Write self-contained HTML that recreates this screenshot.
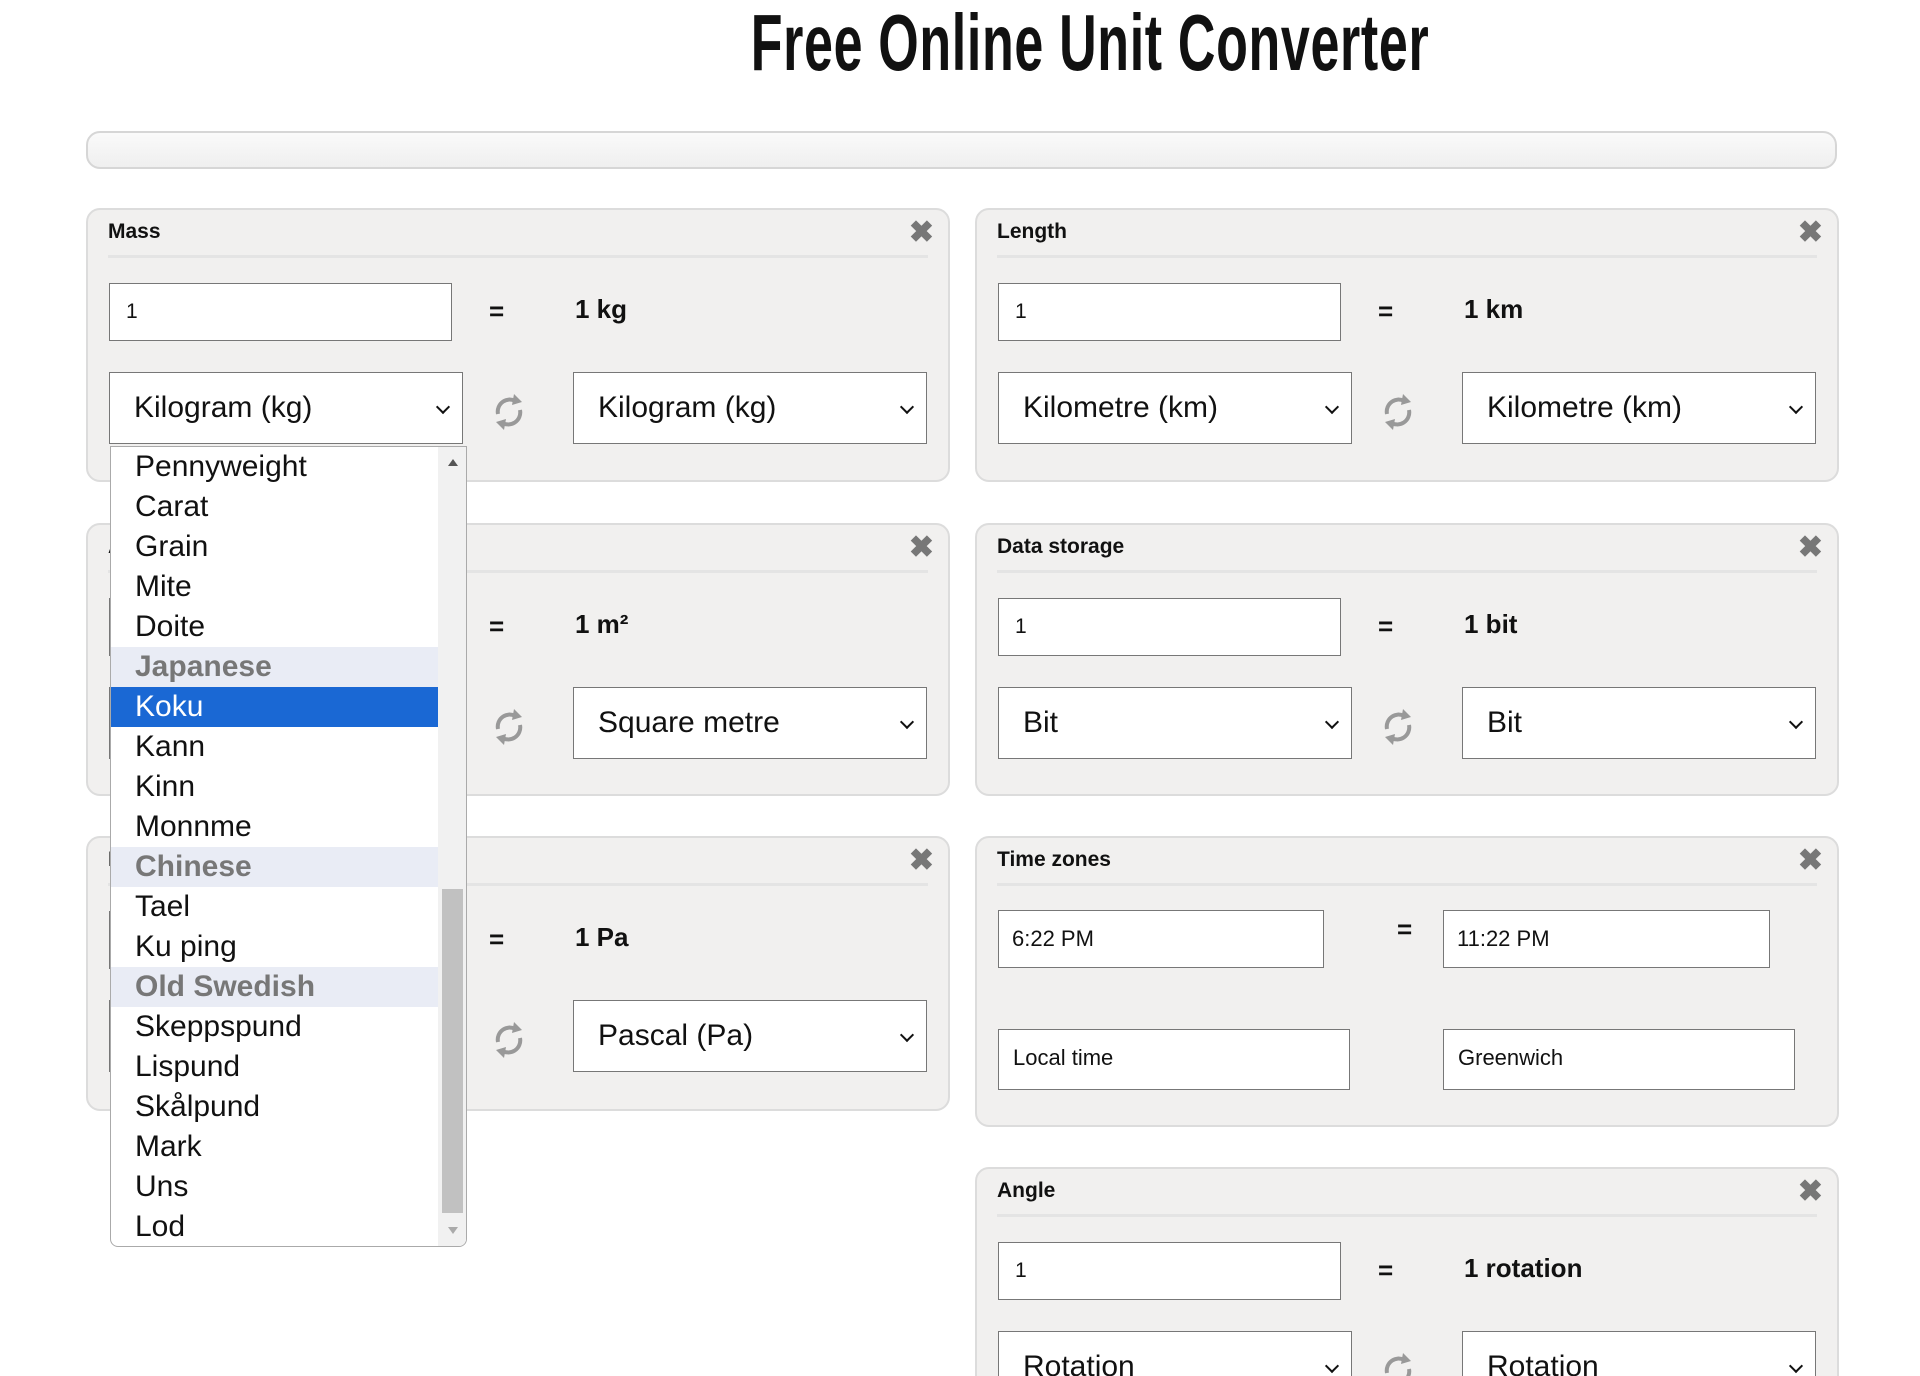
<!DOCTYPE html>
<html><head><meta charset="utf-8"><style>
*{box-sizing:border-box;margin:0;padding:0}
html,body{width:1920px;height:1376px;overflow:hidden}
body{background:#fff;position:relative;font-family:"Liberation Sans",Arial,sans-serif;color:#111}
.title{position:absolute;left:0;width:3354px;top:-3px;text-align:center;font-size:80px;font-weight:bold;font-family:"Liberation Sans Narrow","Liberation Sans",sans-serif;transform:scaleX(.65);transform-origin:0 0;letter-spacing:1px;white-space:nowrap}
.bar{position:absolute;left:86px;top:131px;width:1751px;height:38px;border:2px solid #d6d6d6;border-radius:14px;background:linear-gradient(#fafafa,#efefef)}
.panel{position:absolute;width:864px;border:2px solid #dcdcdc;border-radius:14px;background:#f1f0ef}
.hd{position:absolute;left:20px;right:20px;top:0;height:48px;border-bottom:3px solid #e4e4e4;font-weight:bold;font-size:21px;line-height:44px}
.x{position:absolute;right:14px;top:8px;font-size:30px;color:#777;font-weight:bold;line-height:30px}
.in{position:absolute;left:21px;top:73px;width:343px;height:58px;background:#fff;border:1px solid #777;font-size:21px;padding-left:16px;line-height:56px}
.eq{position:absolute;left:401px;top:86px;font-size:26px;font-weight:bold}
.val{position:absolute;left:487px;top:84px;font-size:26px;font-weight:bold}
.sel{position:absolute;top:162px;width:354px;height:72px;background:#fff;border:1px solid #777;font-size:30px;padding-left:24px;line-height:70px}
.sel:after{content:"";position:absolute;right:14px;top:29px;width:8px;height:8px;border-right:2.5px solid #111;border-bottom:2.5px solid #111;transform:rotate(45deg)}
.s1{left:21px}.s2{left:485px}
.rf{position:absolute;left:404px;top:182px}
.dd{position:absolute;left:110px;top:446px;width:357px;height:801px;background:#fff;border:1px solid #aaa;border-radius:0 0 8px 8px;overflow:hidden}
.it{height:40px;line-height:40px;font-size:30px;padding-left:24px;width:327px}
.g{background:#e9ecf5;color:#777;font-weight:bold}
.k{background:#1a68d4;color:#fff}
.sb{position:absolute;left:327px;top:0;width:29px;height:100%;background:#f1f1f1}
.th{position:absolute;left:4px;right:4px;top:442px;height:324px;background:#c1c1c1}
</style></head><body>
<div class="title">Free Online Unit Converter</div>
<div class="bar"></div>

<div class="panel" style="left:86px;top:208px;height:274px"><div class="hd">Mass</div><div class="x">✖</div>
<div class="in">1</div><div class="eq">=</div><div class="val">1 kg</div>
<div class="sel s1">Kilogram (kg)</div>
<svg class="rf" width="34" height="40" viewBox="0 0 34 40"><path d="M25 10A12 12 0 0 0 6 22M9 30A12 12 0 0 0 28 18" fill="none" stroke="#999" stroke-width="4"/><path d="M22 2l8 8-10 3z M12 38l-8-8 10-3z" fill="#999"/></svg>
<div class="sel s2">Kilogram (kg)</div></div>

<div class="panel" style="left:975px;top:208px;height:274px"><div class="hd">Length</div><div class="x">✖</div>
<div class="in">1</div><div class="eq">=</div><div class="val">1 km</div>
<div class="sel s1">Kilometre (km)</div>
<svg class="rf" width="34" height="40" viewBox="0 0 34 40"><path d="M25 10A12 12 0 0 0 6 22M9 30A12 12 0 0 0 28 18" fill="none" stroke="#999" stroke-width="4"/><path d="M22 2l8 8-10 3z M12 38l-8-8 10-3z" fill="#999"/></svg>
<div class="sel s2">Kilometre (km)</div></div>

<div class="panel" style="left:86px;top:523px;height:273px"><div class="hd">Area</div><div class="x">✖</div>
<div class="in">1</div><div class="eq">=</div><div class="val">1 m²</div>
<div class="sel s1">Square metre</div>
<svg class="rf" width="34" height="40" viewBox="0 0 34 40"><path d="M25 10A12 12 0 0 0 6 22M9 30A12 12 0 0 0 28 18" fill="none" stroke="#999" stroke-width="4"/><path d="M22 2l8 8-10 3z M12 38l-8-8 10-3z" fill="#999"/></svg>
<div class="sel s2">Square metre</div></div>

<div class="panel" style="left:975px;top:523px;height:273px"><div class="hd">Data storage</div><div class="x">✖</div>
<div class="in">1</div><div class="eq">=</div><div class="val">1 bit</div>
<div class="sel s1">Bit</div>
<svg class="rf" width="34" height="40" viewBox="0 0 34 40"><path d="M25 10A12 12 0 0 0 6 22M9 30A12 12 0 0 0 28 18" fill="none" stroke="#999" stroke-width="4"/><path d="M22 2l8 8-10 3z M12 38l-8-8 10-3z" fill="#999"/></svg>
<div class="sel s2">Bit</div></div>

<div class="panel" style="left:86px;top:836px;height:275px"><div class="hd">Pressure</div><div class="x">✖</div>
<div class="in">1</div><div class="eq">=</div><div class="val">1 Pa</div>
<div class="sel s1">Pascal (Pa)</div>
<svg class="rf" width="34" height="40" viewBox="0 0 34 40"><path d="M25 10A12 12 0 0 0 6 22M9 30A12 12 0 0 0 28 18" fill="none" stroke="#999" stroke-width="4"/><path d="M22 2l8 8-10 3z M12 38l-8-8 10-3z" fill="#999"/></svg>
<div class="sel s2">Pascal (Pa)</div></div>

<div class="panel" style="left:975px;top:836px;height:291px"><div class="hd">Time zones</div><div class="x">✖</div>
<div class="in" style="top:72px;width:326px;padding-left:13px;font-size:22px">6:22 PM</div>
<div class="eq" style="left:420px;top:76px">=</div>
<div class="in" style="left:466px;top:72px;width:327px;padding-left:13px;font-size:22px">11:22 PM</div>
<div class="in" style="top:191px;width:352px;padding-left:14px;height:61px;font-size:22px">Local time</div>
<div class="in" style="left:466px;top:191px;width:352px;padding-left:14px;height:61px;font-size:22px">Greenwich</div></div>

<div class="panel" style="left:975px;top:1167px;height:260px"><div class="hd">Angle</div><div class="x">✖</div>
<div class="in">1</div><div class="eq">=</div><div class="val">1 rotation</div>
<div class="sel s1">Rotation</div>
<svg class="rf" width="34" height="40" viewBox="0 0 34 40"><path d="M25 10A12 12 0 0 0 6 22M9 30A12 12 0 0 0 28 18" fill="none" stroke="#999" stroke-width="4"/><path d="M22 2l8 8-10 3z M12 38l-8-8 10-3z" fill="#999"/></svg>
<div class="sel s2">Rotation</div></div>

<div class="dd">
<div class="it">Pennyweight</div><div class="it">Carat</div><div class="it">Grain</div><div class="it">Mite</div><div class="it">Doite</div>
<div class="it g">Japanese</div><div class="it k">Koku</div><div class="it">Kann</div><div class="it">Kinn</div><div class="it">Monnme</div>
<div class="it g">Chinese</div><div class="it">Tael</div><div class="it">Ku ping</div><div class="it g">Old Swedish</div>
<div class="it">Skeppspund</div><div class="it">Lispund</div><div class="it">Skålpund</div><div class="it">Mark</div><div class="it">Uns</div><div class="it">Lod</div>
<div class="sb"><div style="position:absolute;left:10px;top:12px;border:5px solid transparent;border-bottom:7px solid #555;border-top:0"></div><div class="th"></div><div style="position:absolute;left:10px;bottom:12px;border:5px solid transparent;border-top:7px solid #aaa;border-bottom:0"></div></div>
</div>
</body></html>
